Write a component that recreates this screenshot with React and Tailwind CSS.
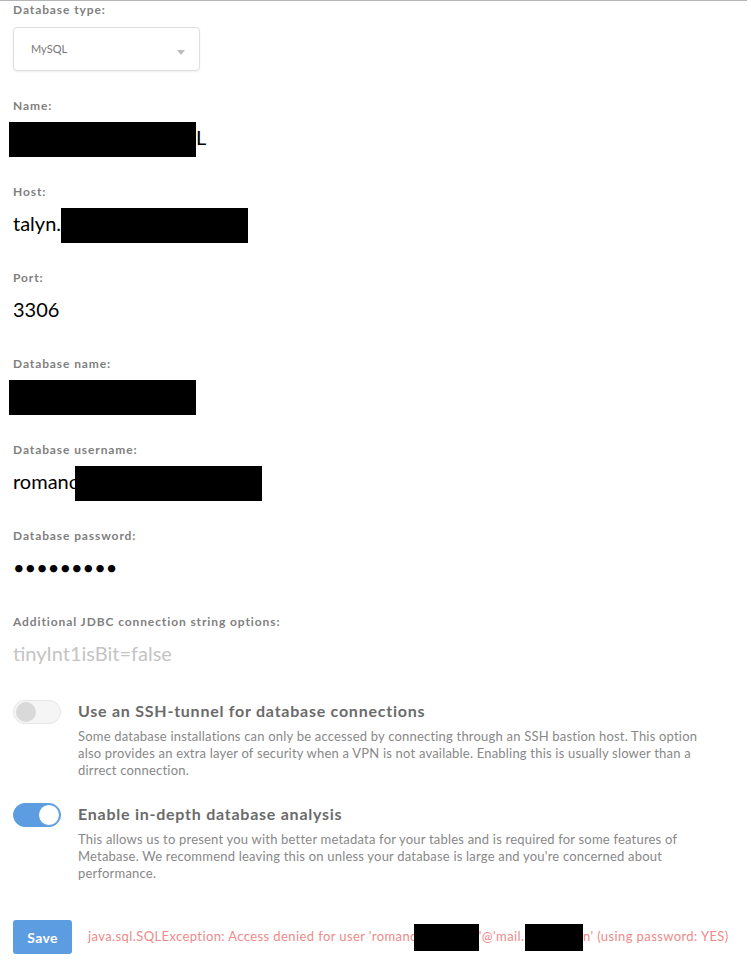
import React from "react";

function Label({ children }) {
  return (
    <div className="text-[12px] leading-[15px] font-bold tracking-[0.9px] text-[#7f7f7f]">{children}</div>
  );
}

function Redact({ className }) {
  return <div className={"bg-black shrink-0 " + className} />;
}

function Field({ label, children }) {
  return (
    <div className="mb-[27px]">
      <Label>{label}</Label>
      <div className="mt-[9px] h-[35px] flex items-start text-[20px] leading-[31px] text-black">
        {children}
      </div>
    </div>
  );
}

function Toggle({ on }) {
  if (on) {
    return (
      <div className="w-[48px] h-[24px] rounded-full bg-[#5b9de0] border border-[#5b9de0] flex items-center justify-end shrink-0">
        <div className="w-[22px] h-[22px] rounded-full bg-white border border-[#5b9de0]" />
      </div>
    );
  }
  return (
    <div className="w-[48px] h-[24px] rounded-full bg-[#f5f5f5] border border-[#e6e6e6] flex items-center pl-[2px] shrink-0">
      <div className="w-[20px] h-[20px] rounded-full bg-[#d9d9d9]" />
    </div>
  );
}

function Option({ on, title, children }) {
  return (
    <div className="flex gap-[17px]">
      <Toggle on={on} />
      <div className="w-[640px]">
        <div className="text-[16px] leading-[22px] font-bold tracking-[0.75px] text-[#6b6b6b]">{title}</div>
        <p className="mt-[6px] text-[13px] leading-[17px] tracking-[0.2px] text-[#888]">{children}</p>
      </div>
    </div>
  );
}

export default function App() {
  return (
    <div className="min-h-[974px] bg-white border-t border-[#b5b5b5] w-[747px] px-[13px] pt-[1px]" style={{ fontFamily: "Lato, 'Noto Sans', sans-serif" }}>
      {/* Database type */}
      <div className="mb-[27px]">
        <Label>Database type:</Label>
        <div className="mt-[10px] w-[187px] h-[44px] border border-[#dedede] rounded-[4px] shadow-[0_1px_2px_rgba(0,0,0,0.07)] flex items-center justify-between pl-[17px] pr-[14px]">
          <span className="text-[11px] text-[#777]">MySQL</span>
          <svg width="8" height="5" viewBox="0 0 8 5" className="mt-[6px]">
            <path d="M0 0 L8 0 L4 5 Z" fill="#bdbdbd" />
          </svg>
        </div>
      </div>

      <Field label="Name:">
        <Redact className="w-[187px] h-[35px] -ml-[4px]" />
        <span>L</span>
      </Field>

      <Field label="Host:">
        <span>talyn.</span>
        <Redact className="w-[187px] h-[35px]" />
      </Field>

      <Field label="Port:">
        <span>3306</span>
      </Field>

      <Field label="Database name:">
        <Redact className="w-[187px] h-[35px] -ml-[4px]" />
      </Field>

      <Field label="Database username:">
        <span>romanc</span>
        <Redact className="w-[187px] h-[35px] -ml-[3px]" />
      </Field>

      <Field label="Database password:">
        <span>•••••••••</span>
      </Field>

      <Field label="Additional JDBC connection string options:">
        <span className="text-[#c4c4c4]">tinyInt1isBit=false</span>
      </Field>

      <div className="flex flex-col gap-[24px]">
        <Option on={false} title="Use an SSH-tunnel for database connections">
          Some database installations can only be accessed by connecting through an SSH bastion host. This option also provides an extra layer of security when a VPN is not available. Enabling this is usually slower than a dirrect connection.
        </Option>
        <Option on={true} title="Enable in-depth database analysis">
          This allows us to present you with better metadata for your tables and is required for some features of Metabase. We recommend leaving this on unless your database is large and you're concerned about performance.
        </Option>
      </div>

      <div className="mt-[38px] flex items-center gap-[16px]">
        <button className="w-[59px] h-[34px] rounded-[3px] bg-[#5b9de0] text-white text-[14px] font-bold tracking-[0.3px]">
          Save
        </button>
        <div className="flex items-center text-[13px] tracking-[0.4px] text-[#ef8a8a] whitespace-nowrap">
          <span>java.sql.SQLException: Access denied for user 'romanc</span>
          <Redact className="w-[65px] h-[27px] -ml-[3px]" />
          <span>'@'mail.l</span>
          <Redact className="w-[58px] h-[27px] -ml-[3px]" />
          <span>n' (using password: YES)</span>
        </div>
      </div>
    </div>
  );
}
